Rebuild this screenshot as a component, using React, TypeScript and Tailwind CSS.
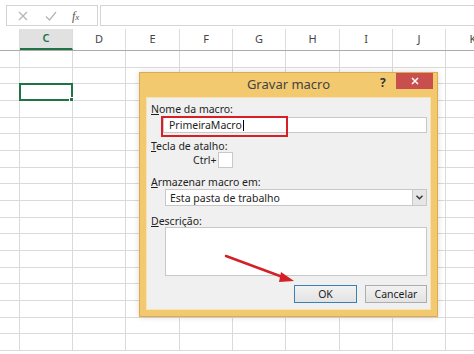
import React from "react"

const font = { fontFamily: '"Noto Sans", "Liberation Sans", sans-serif' }

// column edges in px (first column is the visible slice of B)
const colEdges = [0, 20, 73, 126, 180, 233, 286, 340, 393, 446, 500]
const colNames = ["", "C", "D", "E", "F", "G", "H", "I", "J", "K"]
const rowCount = 18
const rowTop = 51
const rowH = 16.667

function Mn({ ch }: { ch: string }) {
  return <span className="underline underline-offset-[1px]">{ch}</span>
}

function FormulaBar() {
  return (
    <div className="flex h-[29px] pt-[5px] pl-[6px]">
      <div className="flex h-[21px] w-[92px] items-center border border-[#d4d4d4] bg-white">
        <svg width="10" height="10" viewBox="0 0 10 10" className="ml-[11px]">
          <path d="M1 1 L9 9 M9 1 L1 9" stroke="#b4b4b4" strokeWidth="1.2" />
        </svg>
        <svg width="12" height="10" viewBox="0 0 12 10" className="ml-[17px]">
          <path d="M1 5.5 L4.5 9 L11 1" stroke="#b4b4b4" strokeWidth="1.2" fill="none" />
        </svg>
        <span
          className="ml-[15px] text-[12px] italic leading-none text-[#555]"
          style={{ fontFamily: '"Liberation Serif", serif' }}
        >
          f<span className="text-[9px]">x</span>
        </span>
      </div>
      <div className="ml-[2px] h-[21px] flex-1 border-y border-l border-[#d4d4d4] bg-white" />
    </div>
  )
}

function HeaderRow() {
  return (
    <div className="flex h-[22px] border-b border-[#ababab]">
      {colNames.map((name, i) => {
        const w = colEdges[i + 1] - colEdges[i]
        const sel = name === "C"
        return (
          <div
            key={i}
            className={`flex shrink-0 items-center justify-center text-[11px] ${
              sel
                ? "border-b-2 border-[#217346] bg-[#e1e1e1] font-semibold text-[#217346]"
                : "text-[#444]"
            } ${i < colNames.length - 1 ? "border-r border-r-[#dcdcdc]" : ""}`}
            style={{ width: w }}
          >
            {name}
          </div>
        )
      })}
    </div>
  )
}

function Grid() {
  const rows = Array.from({ length: rowCount }, (_, k) => {
    const a = Math.round(rowTop + rowH * k)
    const b = Math.round(rowTop + rowH * (k + 1))
    return b - a
  })
  return (
    <div>
      {rows.map((h, r) => (
        <div key={r} className="flex border-b border-[#dadada]" style={{ height: h }}>
          {colNames.map((name, i) => {
            const w = colEdges[i + 1] - colEdges[i]
            const active = name === "C" && r === 2
            return (
              <div
                key={i}
                className="relative shrink-0 border-r border-[#dadada]"
                style={{ width: w }}
              >
                {active && (
                  <div className="absolute -left-[1px] -top-[1px] h-[18px] w-[54px] border-2 border-[#217346]">
                    <div className="absolute -bottom-[3px] -right-[3px] h-[5px] w-[5px] border border-white bg-[#217346]" />
                  </div>
                )}
              </div>
            )
          })}
        </div>
      ))}
    </div>
  )
}

function Dialog() {
  return (
    <div className="absolute left-[139px] top-[72px] flex h-[245px] w-[299px] flex-col border border-[#dcab4c] bg-[#f2c96f] shadow-[0_0_6px_rgba(0,0,0,0.15)]">
      {/* title bar */}
      <div className="relative flex h-[24px] items-center justify-center">
        <span className="text-[13px] text-[#444]">Gravar macro</span>
        <span className="absolute left-[240px] top-[4px] text-[12px] font-bold leading-none text-[#333]">?</span>
        <div className="absolute right-[4px] top-0 flex h-[16px] w-[37px] items-center justify-center bg-[#c94f4f]">
          <svg width="8" height="8" viewBox="0 0 8 8">
            <path d="M1 1 L7 7 M7 1 L1 7" stroke="white" strokeWidth="1.5" />
          </svg>
        </div>
      </div>

      {/* client area */}
      <div className="relative mx-[6px] flex h-[213px] flex-col border border-[#f7e2b3] bg-[#f0f0f0] pl-[4px] pr-[3px] text-[10.5px] leading-[12px] text-[#1e1e1e]">
        <div className="mt-[5px]">
          <Mn ch="N" />ome da macro:
        </div>
        <div className="ml-[12px] mt-[2px] flex h-[16px] items-center border border-[#c8c8c8] bg-white pl-[5px]">
          PrimeiraMacro<span className="ml-[1px] h-[11px] w-px bg-black" />
        </div>

        <div className="mt-[7px]">
          <Mn ch="T" />ecla de atalho:
        </div>
        <div className="flex h-[16px] items-center pl-[42px]">
          <span>Ctrl+</span>
          <div className="ml-[2px] h-[16px] w-[15px] border border-[#c8c8c8] bg-white" />
        </div>

        <div className="mt-[8px]">
          <Mn ch="A" />rmazenar macro em:
        </div>
        <div className="ml-[14px] mt-[1px] flex h-[17px] items-center border border-[#c8c8c8] bg-white pl-[4px]">
          <span className="flex-1">Esta pasta de trabalho</span>
          <div className="flex h-[15px] w-[14px] items-center justify-center border-l border-[#c8c8c8] bg-[#e6e6e6]">
            <svg width="7" height="5" viewBox="0 0 7 5">
              <path d="M0.5 0.8 L3.5 3.8 L6.5 0.8" stroke="#333" strokeWidth="1.4" fill="none" />
            </svg>
          </div>
        </div>

        <div className="mt-[9px]">
          <Mn ch="D" />escrição:
        </div>
        <div className="ml-[14px] h-[49px] border border-[#c8c8c8] bg-white" />

        <div className="mt-[9px] flex justify-end gap-[8px]">
          <button className="flex h-[18px] w-[63px] items-center justify-center border border-[#3c7fb1] bg-gradient-to-b from-[#f2f2f2] to-[#e3e3e3]">
            OK
          </button>
          <button className="flex h-[18px] w-[62px] items-center justify-center border border-[#adadad] bg-gradient-to-b from-[#f2f2f2] to-[#e3e3e3]">
            Cancelar
          </button>
        </div>

        {/* red annotation box */}
        <div className="pointer-events-none absolute left-[14px] top-[18px] h-[21px] w-[127px] border-[2.5px] border-[#d81f26]" />
      </div>
    </div>
  )
}

function Arrow() {
  return (
    <svg className="pointer-events-none absolute left-0 top-0" width="474" height="354">
      <line x1="226" y1="256" x2="284" y2="277.5" stroke="#d42027" strokeWidth="2.5" strokeLinecap="round" />
      <polygon points="294,281 281,272 279,282" fill="#d42027" />
    </svg>
  )
}

export default function App() {
  return (
    <div className="relative h-[354px] w-[474px] overflow-hidden bg-white" style={font}>
      <FormulaBar />
      <HeaderRow />
      <Grid />
      <Dialog />
      <Arrow />
    </div>
  )
}
